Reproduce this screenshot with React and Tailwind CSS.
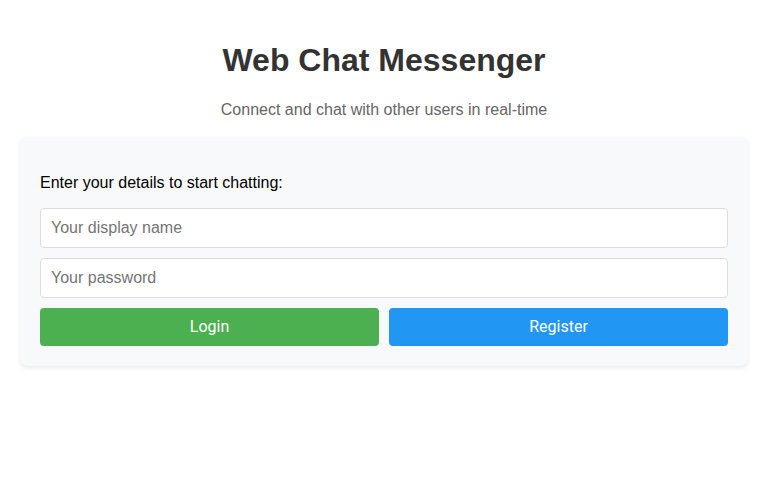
export default function App() {
  return (
    <div className="min-h-[480px] bg-white px-5 pt-[20px]" style={{ fontFamily: '"Liberation Sans", Arial, sans-serif' }}>
      <h1 className="mt-[22px] text-center text-[32px] font-bold leading-[37px] text-[#333]">Web Chat Messenger</h1>
      <p className="mt-[22px] text-center text-[16px] leading-[18px] text-[#666]">Connect and chat with other users in real-time</p>
      <div className="mt-[18px] rounded-lg bg-[#f8f9fa] px-5 pb-5 pt-[37px] shadow-[0_2px_5px_rgba(0,0,0,0.08)]">
        <p className="text-[16px] leading-[18px] text-black">Enter your details to start chatting:</p>
        <input
          className="mt-[16px] block h-[40px] w-full rounded border border-[#ddd] bg-white px-[10px] text-[16px] text-[#333] placeholder:text-[#757575] outline-none"
          placeholder="Your display name"
        />
        <input
          type="password"
          className="mt-[10px] block h-[40px] w-full rounded border border-[#ddd] bg-white px-[10px] text-[16px] text-[#333] placeholder:text-[#757575] outline-none"
          placeholder="Your password"
        />
        <div className="mt-[10px] flex gap-[10px]">
          <button className="h-[38px] flex-1 rounded bg-[#4CAF50] text-[16px] text-white" style={{ fontFamily: 'Roboto, sans-serif' }}>Login</button>
          <button className="h-[38px] flex-1 rounded bg-[#2196F3] text-[16px] text-white" style={{ fontFamily: 'Roboto, sans-serif' }}>Register</button>
        </div>
      </div>
    </div>
  );
}
